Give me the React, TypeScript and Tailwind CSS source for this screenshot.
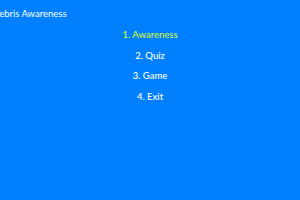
export default function App() {
  const items = ["1. Awareness", "2. Quiz", "3. Game", "4. Exit"];
  return (
    <div
      className="w-[300px] h-[200px] overflow-hidden bg-[#0080ff] text-white relative"
      style={{ fontFamily: "Lato, 'Noto Sans', sans-serif" }}
    >
      <div className="-ml-[8px] pt-[8px] text-[9.5px] leading-[12px]">Debris Awareness</div>
      <div className="flex flex-col items-center mt-[8px] gap-[7.5px] text-[9.5px] leading-[13px] font-medium">
        {items.map((t, i) => (
          <div key={t} className={i === 0 ? "text-[#d2f53a]" : "text-white"}>
            {t}
          </div>
        ))}
      </div>
    </div>
  );
}
